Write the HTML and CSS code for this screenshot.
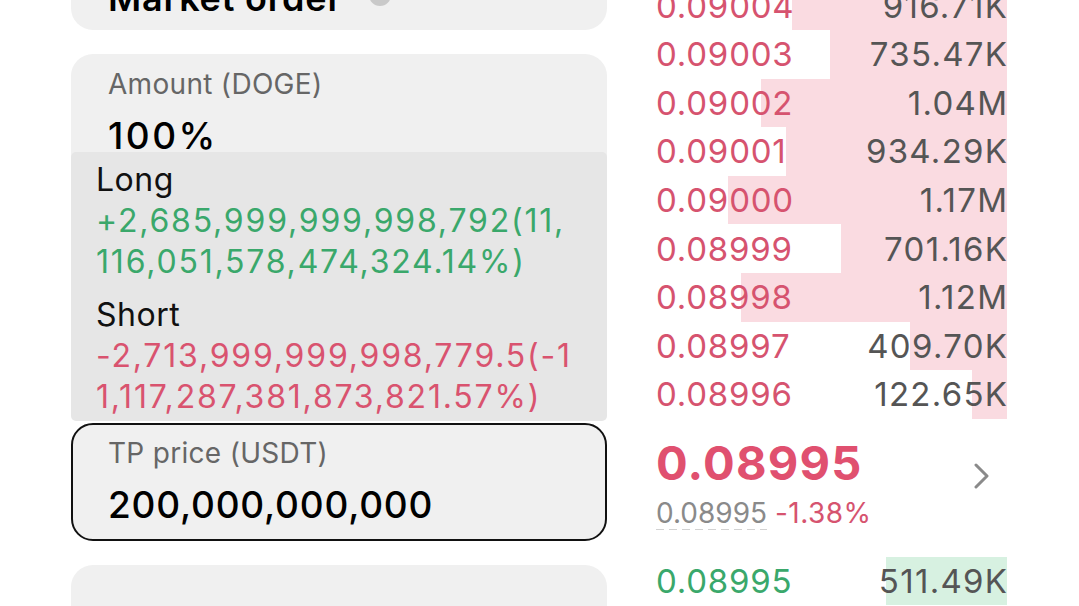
FILE: index.html
```html
<!DOCTYPE html>
<html lang="en">
<head>
  <meta charset="UTF-8" />
  <meta name="viewport" content="width=device-width, initial-scale=1.0" />
  <title>DOGE/USDT Trade</title>
  <link rel="stylesheet" href="styles.css">
</head>
<body>
  <div class="screen">
    <section class="form">
      <div class="field field-type">
        <span class="type-name">Market order</span>
        <span class="info-dot"></span>
      </div>

      <div class="field field-amount">
        <div class="label">Amount (DOGE)</div>
        <div class="value">100%</div>

        <div class="pnl-tip">
          <div class="tip-title">Long</div>
          <div class="tip-num up">+2,685,999,999,998,792(11,<br>116,051,578,474,324.14%)</div>
          <div class="tip-title tip-gap">Short</div>
          <div class="tip-num down">-2,713,999,999,998,779.5(-1<br>1,117,287,381,873,821.57%)</div>
        </div>
      </div>

      <div class="field field-tp">
        <div class="label">TP price (USDT)</div>
        <div class="value">200,000,000,000</div>
      </div>

      <div class="field field-next"></div>
    </section>

    <section class="book">
      <div class="asks">
        <div class="row"><i class="bar ask" style="width:215px"></i><span class="price">0.09004</span><span class="qty">916.71K</span></div>
        <div class="row"><i class="bar ask" style="width:177px"></i><span class="price">0.09003</span><span class="qty">735.47K</span></div>
        <div class="row"><i class="bar ask" style="width:246px"></i><span class="price">0.09002</span><span class="qty">1.04M</span></div>
        <div class="row"><i class="bar ask" style="width:221px"></i><span class="price">0.09001</span><span class="qty">934.29K</span></div>
        <div class="row"><i class="bar ask" style="width:279px"></i><span class="price">0.09000</span><span class="qty">1.17M</span></div>
        <div class="row"><i class="bar ask" style="width:166px"></i><span class="price">0.08999</span><span class="qty">701.16K</span></div>
        <div class="row"><i class="bar ask" style="width:266px"></i><span class="price">0.08998</span><span class="qty">1.12M</span></div>
        <div class="row"><i class="bar ask" style="width:97px"></i><span class="price">0.08997</span><span class="qty">409.70K</span></div>
        <div class="row"><i class="bar ask" style="width:35px"></i><span class="price">0.08996</span><span class="qty">122.65K</span></div>
      </div>

      <div class="mid">
        <div class="mid-top">
          <span class="last">0.08995</span>
          <svg class="chev" width="16" height="26" viewBox="0 0 16 26">
            <polyline points="2,2 13,13 2,24" fill="none" stroke="#8a8a8a" stroke-width="3" stroke-linecap="round" stroke-linejoin="round"/>
          </svg>
        </div>
        <div class="mid-sub">
          <span class="mark">0.08995</span>
          <span class="change">-1.38%</span>
        </div>
      </div>

      <div class="bids">
        <div class="row"><i class="bar bid" style="width:121px"></i><span class="price">0.08995</span><span class="qty">511.49K</span></div>
      </div>
    </section>
  </div>
</body>
</html>
```

FILE: styles.css
```css
* {
  box-sizing: border-box;
}
body {
  margin: 0;
  height: 606px;
  overflow: hidden;
  background: #fff;
  color: #111;
  font-family: Inter, "Noto Sans", sans-serif;
}
.screen {
  display: flex;
  align-items: flex-start;
  gap: 49px;
  padding-left: 71px;
}

/* order form */
.form {
  width: 536px;
  margin-top: -50px;
  display: flex;
  flex-direction: column;
  gap: 24px;
}
.field {
  position: relative;
  background: #f0f0f0;
  border-radius: 22px;
  padding: 0 37px;
}
.field-type {
  height: 80px;
  padding-top: 28px;
  display: flex;
  align-items: flex-start;
  gap: 26px;
}
.type-name {
  font-size: 36px;
  font-weight: 600;
  line-height: 40px;
  letter-spacing: 0.8px;
  color: #000;
}
.info-dot {
  width: 22px;
  height: 22px;
  margin-top: 6px;
  border-radius: 50%;
  background: #c9c9c9;
}
.label {
  font-size: 28px;
  line-height: 34px;
  letter-spacing: 0.3px;
  color: #666;
}
.value {
  font-size: 37px;
  line-height: 44px;
  font-weight: 500;
  letter-spacing: 0.8px;
  color: #000;
}
.field-amount {
  height: 345px;
  padding-top: 13px;
}
.field-amount .value {
  margin-top: 13px;
  letter-spacing: 2.5px;
}
.field-tp {
  height: 118px;
  padding: 11px 35px 0;
  border: 2px solid #111;
}
.field-tp .value {
  margin-top: 13px;
}
.field-next {
  height: 80px;
}

/* pnl tooltip over the amount field */
.pnl-tip {
  position: absolute;
  top: 98px;
  left: 0;
  right: 0;
  height: 269px;
  padding: 7px 25px 0;
  background: #e6e6e6;
  border-radius: 5px;
  font-size: 32px;
  line-height: 41px;
}
.tip-title {
  color: #111;
  letter-spacing: 0.5px;
}
.tip-num {
  letter-spacing: 1.8px;
}
.tip-gap {
  margin-top: 12px;
}
.up {
  color: #3aa86b;
}
.down {
  color: #d9536f;
}

/* order book */
.book {
  width: 351px;
  margin-top: -18.6px;
}
.row {
  position: relative;
  height: 48.6px;
  display: flex;
  align-items: center;
  justify-content: space-between;
  font-size: 33px;
  letter-spacing: 0.8px;
}
.row span {
  position: relative;
}
.row .qty {
  letter-spacing: 1.3px;
  margin-right: -1.3px;
}
.bar {
  position: absolute;
  top: 0;
  right: 0;
  bottom: 0;
}
.bar.ask {
  background: #fadbe1;
}
.bar.bid {
  background: #d7f1e1;
}
.asks .price {
  color: #d6536f;
}
.bids .price {
  color: #3aa86b;
}
.qty {
  color: #555;
}
.mid {
  height: 138px;
  padding-top: 18px;
}
.mid-top {
  display: flex;
  justify-content: space-between;
  align-items: flex-start;
}
.last {
  font-size: 47px;
  line-height: 52px;
  font-weight: 700;
  letter-spacing: 1.2px;
  color: #e0506f;
}
.chev {
  margin-top: 26px;
  margin-right: 17px;
}
.mid-sub {
  margin-top: 7px;
  font-size: 28px;
  line-height: 34px;
}
.mark {
  display: inline-block;
  color: #8a8a8a;
  background: repeating-linear-gradient(90deg, #d2d2d2 0 8px, transparent 8px 13px) left bottom / 100% 1px no-repeat;
}
.change {
  color: #d6536f;
  letter-spacing: 0.5px;
}
```
